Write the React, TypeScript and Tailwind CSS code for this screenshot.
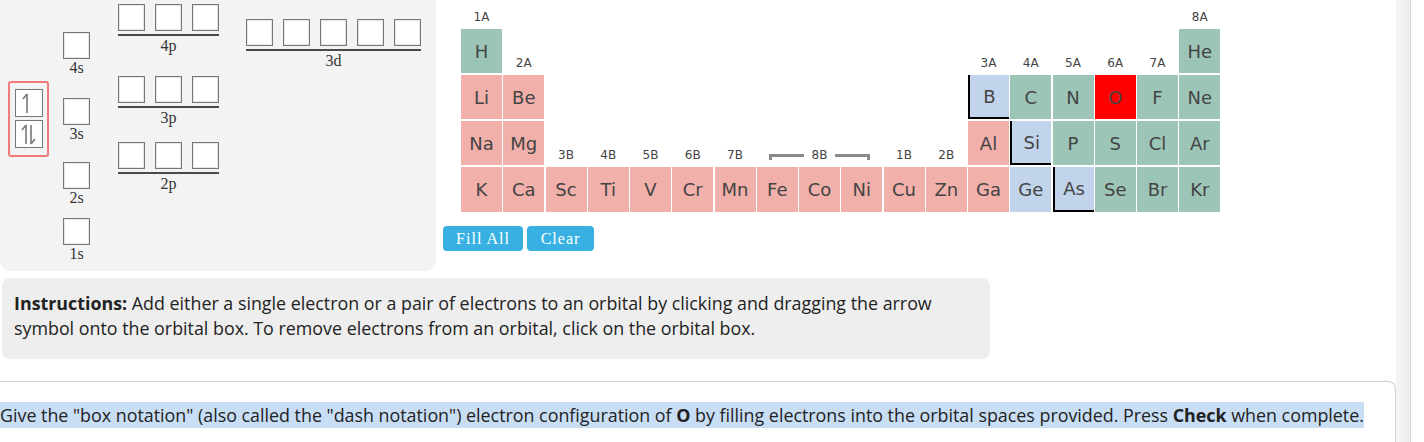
import React from "react";

type Kind = "g" | "p" | "b" | "r";

type Cell = {
  sym: string;
  col: number;
  row: number;
  kind: Kind;
  stair?: boolean;
};

const elements: Cell[] = [
  { sym: "H", col: 1, row: 2, kind: "g" },
  { sym: "He", col: 18, row: 2, kind: "g" },
  { sym: "Li", col: 1, row: 3, kind: "p" },
  { sym: "Be", col: 2, row: 3, kind: "p" },
  { sym: "B", col: 13, row: 3, kind: "b", stair: true },
  { sym: "C", col: 14, row: 3, kind: "g" },
  { sym: "N", col: 15, row: 3, kind: "g" },
  { sym: "O", col: 16, row: 3, kind: "r" },
  { sym: "F", col: 17, row: 3, kind: "g" },
  { sym: "Ne", col: 18, row: 3, kind: "g" },
  { sym: "Na", col: 1, row: 4, kind: "p" },
  { sym: "Mg", col: 2, row: 4, kind: "p" },
  { sym: "Al", col: 13, row: 4, kind: "p" },
  { sym: "Si", col: 14, row: 4, kind: "b", stair: true },
  { sym: "P", col: 15, row: 4, kind: "g" },
  { sym: "S", col: 16, row: 4, kind: "g" },
  { sym: "Cl", col: 17, row: 4, kind: "g" },
  { sym: "Ar", col: 18, row: 4, kind: "g" },
];

const row4 = ["K", "Ca", "Sc", "Ti", "V", "Cr", "Mn", "Fe", "Co", "Ni", "Cu", "Zn", "Ga", "Ge", "As", "Se", "Br", "Kr"];
row4.forEach((sym, i) => {
  const col = i + 1;
  let kind: Kind = "p";
  if (sym === "Ge" || sym === "As") kind = "b";
  if (col >= 16) kind = "g";
  elements.push({ sym, col, row: 5, kind, stair: sym === "As" });
});

const groupLabels = [
  { t: "1A", col: 1, row: 1 },
  { t: "8A", col: 18, row: 1 },
  { t: "2A", col: 2, row: 2 },
  { t: "3A", col: 13, row: 2 },
  { t: "4A", col: 14, row: 2 },
  { t: "5A", col: 15, row: 2 },
  { t: "6A", col: 16, row: 2 },
  { t: "7A", col: 17, row: 2 },
  { t: "3B", col: 3, row: 4 },
  { t: "4B", col: 4, row: 4 },
  { t: "5B", col: 5, row: 4 },
  { t: "6B", col: 6, row: 4 },
  { t: "7B", col: 7, row: 4 },
  { t: "1B", col: 11, row: 4 },
  { t: "2B", col: 12, row: 4 },
];

const kindBg: Record<Kind, string> = {
  g: "bg-[#9cc4b7]",
  p: "bg-[#f2b0aa]",
  b: "bg-[#c1d4ec]",
  r: "bg-[#ff0000]",
};

function OrbBox() {
  return <div className="w-[27px] h-[27px] bg-white border border-[#777] shadow-[inset_0_0_0_1px_#e6e6e6]" />;
}

function Label({ t, className }: { t: string; className?: string }) {
  return (
    <div
      className={"text-[16px] leading-[16px] text-[#333] text-center " + (className ?? "")}
      style={{ fontFamily: '"Liberation Serif", serif' }}
    >
      {t}
    </div>
  );
}

function PGroup({ n, count, className }: { n: string; count: number; className?: string }) {
  return (
    <div className={"flex flex-col " + (className ?? "")}>
      <div className="flex gap-[10px]">
        {Array.from({ length: count }).map((_, i) => (
          <OrbBox key={i} />
        ))}
      </div>
      <div className="mt-[3px] border-t-2 border-[#4a4a4a]" />
      <Label t={n} className="mt-[2px]" />
    </div>
  );
}

function UpHarpoon({ x }: { x: number }) {
  return (
    <>
      <line x1={x} y1={4} x2={x} y2={23} stroke="#777" strokeWidth={1.6} />
      <line x1={x} y1={4} x2={x - 4} y2={9} stroke="#777" strokeWidth={1.6} />
    </>
  );
}

function DownHarpoon({ x }: { x: number }) {
  return (
    <>
      <line x1={x} y1={4} x2={x} y2={23} stroke="#777" strokeWidth={1.6} />
      <line x1={x} y1={23} x2={x + 4} y2={18} stroke="#777" strokeWidth={1.6} />
    </>
  );
}

function ArrowPalette() {
  return (
    <div className="mt-[81px] ml-[8px] w-[41px] h-[76px] border-2 border-[#f27a7a] rounded-[3px] flex flex-col items-center pt-[6px] gap-[3px]">
      <div className="w-[28px] h-[28px] bg-white border border-[#777]">
        <svg width="26" height="26" viewBox="0 0 26 26">
          <UpHarpoon x={11} />
        </svg>
      </div>
      <div className="w-[28px] h-[28px] bg-white border border-[#777]">
        <svg width="26" height="26" viewBox="0 0 26 26">
          <UpHarpoon x={10} />
          <DownHarpoon x={15} />
        </svg>
      </div>
    </div>
  );
}

function OrbitalPanel() {
  return (
    <div className="w-[436px] h-[271px] bg-[#f3f3f3] rounded-b-[10px] flex shrink-0">
      <ArrowPalette />
      <div className="ml-[14px] flex flex-col">
        <div className="mt-[32px]"><OrbBox /></div>
        <Label t="4s" className="mt-[1px]" />
        <div className="mt-[22px]"><OrbBox /></div>
        <Label t="3s" className="mt-[1px]" />
        <div className="mt-[20px]"><OrbBox /></div>
        <Label t="2s" className="mt-[1px]" />
        <div className="mt-[12px]"><OrbBox /></div>
        <Label t="1s" className="mt-[1px]" />
      </div>
      <div className="ml-[28px] flex flex-col">
        <PGroup n="4p" count={3} className="mt-[4px]" />
        <PGroup n="3p" count={3} className="mt-[22px]" />
        <PGroup n="2p" count={3} className="mt-[16px]" />
      </div>
      <div className="ml-[27px] flex flex-col">
        <PGroup n="3d" count={5} className="mt-[19px]" />
      </div>
    </div>
  );
}

function PeriodicTable() {
  return (
    <div
      className="ml-[18px] grid grid-cols-[repeat(18,41px)] grid-rows-[27px_44px_44px_44px_45px] gap-x-[1.25px] gap-y-[2px] text-[#444]"
      style={{ fontFamily: '"DejaVu Sans", sans-serif' }}
    >
      {groupLabels.map((g) => (
        <div
          key={g.t}
          className="flex items-end justify-center pb-[3px] text-[12px] leading-[14px]"
          style={{ gridColumn: g.col, gridRow: g.row }}
        >
          {g.t}
        </div>
      ))}
      <div className="flex items-end pb-[3px] text-[12px] leading-[14px]" style={{ gridColumn: "8 / 11", gridRow: 4 }}>
        <div className="flex-1 ml-[12px] mb-[2px] h-[6px] border-t-[3px] border-l-[3px] border-[#8a8a8a]" />
        <div className="px-[8px]">8B</div>
        <div className="flex-1 mr-[12px] mb-[2px] h-[6px] border-t-[3px] border-r-[3px] border-[#8a8a8a]" />
      </div>
      {elements.map((e) => (
        <div
          key={e.sym}
          className={
            "flex items-center justify-center text-[18px] " +
            kindBg[e.kind] +
            (e.stair ? " border-l-2 border-b-2 border-black" : "")
          }
          style={{ gridColumn: e.col, gridRow: e.row }}
        >
          {e.sym}
        </div>
      ))}
    </div>
  );
}

export default function App() {
  return (
    <div className="w-[1424px] h-[442px] bg-white flex overflow-hidden" style={{ fontFamily: '"Open Sans", sans-serif' }}>
      <div className="w-[1396px] shrink-0 flex flex-col">
        <div className="flex">
          <OrbitalPanel />
          <div className="pl-[7px] flex flex-col">
            <PeriodicTable />
            <div className="mt-[14px] flex gap-[4px]" style={{ fontFamily: '"Liberation Serif", serif' }}>
              <button className="w-[80px] h-[25px] rounded-[4px] bg-[#38b1e2] text-white text-[16px] tracking-[1px]">
                Fill All
              </button>
              <button className="w-[67px] h-[25px] rounded-[4px] bg-[#38b1e2] text-white text-[16px] tracking-[1px]">
                Clear
              </button>
            </div>
          </div>
        </div>
        <div className="mt-[7px] ml-[2px] w-[988px] h-[81px] bg-[#eeeeee] rounded-[8px] px-[12px] pt-[13px] text-[17.85px] leading-[25px] text-[#222]">
          <b>Instructions:</b> Add either a single electron or a pair of electrons to an orbital by clicking and dragging the arrow
          symbol onto the orbital box. To remove electrons from an orbital, click on the orbital box.
        </div>
        <div className="mt-[22px] flex-1 border-t border-r border-[#d2d2d2] rounded-tr-[8px] pt-[21px] shadow-[0_0_3px_rgba(0,0,0,0.08)]">
          <span className="bg-[#c8def5] text-[17.85px] leading-[24px] text-[#222] py-[1px]">
            Give the "box notation" (also called the "dash notation") electron configuration of <b>O</b> by filling electrons
            into the orbital spaces provided. Press <b>Check</b> when complete.
          </span>
        </div>
      </div>
      <div className="w-[15px] shrink-0 bg-gradient-to-r from-[#f6f6f6] to-[#ececec] border-r border-[#d8d8d8]" />
      <div className="flex-1 bg-white" />
    </div>
  );
}
